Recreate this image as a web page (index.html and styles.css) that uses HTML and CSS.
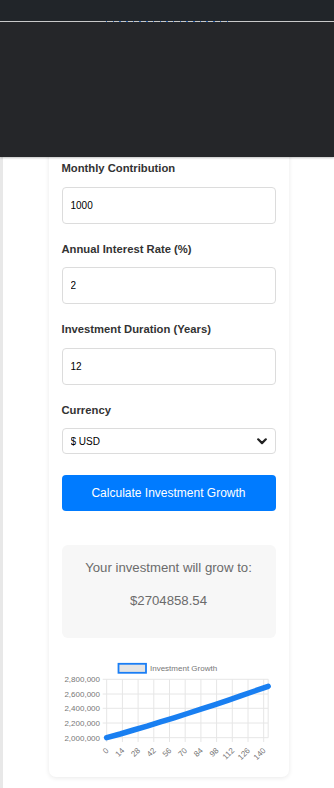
FILE: index.html
```html
<!DOCTYPE html>
<html lang="en">
<head>
    <meta charset="UTF-8">
    <meta name="viewport" content="width=device-width, initial-scale=1.0">
    <title>Investment Calculator</title>
    <link rel="stylesheet" href="styles.css">
</head>
<body>
    <div class="topbar">
        <div class="topbar-strip"><span class="topbar-dots"></span></div>
        <div class="topbar-shade"></div>
    </div>

    <div class="page">
        <div class="card">
            <div class="form-group">
                <label for="monthly">Monthly Contribution</label>
                <input type="number" id="monthly" value="1000">
            </div>

            <div class="form-group">
                <label for="rate">Annual Interest Rate (%)</label>
                <input type="number" id="rate" value="2">
            </div>

            <div class="form-group">
                <label for="years">Investment Duration (Years)</label>
                <input type="number" id="years" value="12">
            </div>

            <div class="form-group">
                <label for="currency">Currency</label>
                <div class="select-wrap">
                    <select id="currency">
                        <option>$ USD</option>
                        <option>€ EUR</option>
                        <option>£ GBP</option>
                    </select>
                    <svg class="select-arrow" width="10" height="7" viewBox="0 0 10 7">
                        <path d="M1.2 1.3 L5 5.1 L8.8 1.3" fill="none" stroke="#222" stroke-width="2.2" stroke-linecap="round" stroke-linejoin="round"/>
                    </svg>
                </div>
            </div>

            <button class="calc-btn">Calculate Investment Growth</button>

            <div class="result">
                <p>Your investment will grow to:</p>
                <p class="amount">$2704858.54</p>
            </div>

            <svg class="chart" width="214" height="109" viewBox="0 0 214 109">
                <!-- legend -->
                <rect x="56.5" y="8.8" width="27.5" height="9" fill="#e4e4e4" stroke="#1a7ef5" stroke-width="1.8"/>
                <text x="88" y="16" class="legend-text">Investment Growth</text>

                <!-- grid -->
                <g stroke="#e6e6e6" stroke-width="1">
                    <line x1="40.7" y1="24.3" x2="206.2" y2="24.3"/>
                    <line x1="40.7" y1="39" x2="206.2" y2="39"/>
                    <line x1="40.7" y1="53.3" x2="206.2" y2="53.3"/>
                    <line x1="40.7" y1="68" x2="206.2" y2="68"/>
                    <line x1="40.7" y1="82.7" x2="206.2" y2="82.7"/>
                    <line x1="44.7" y1="24.3" x2="44.7" y2="87"/>
                    <line x1="60.4" y1="24.3" x2="60.4" y2="87"/>
                    <line x1="76.1" y1="24.3" x2="76.1" y2="87"/>
                    <line x1="91.8" y1="24.3" x2="91.8" y2="87"/>
                    <line x1="107.5" y1="24.3" x2="107.5" y2="87"/>
                    <line x1="123.2" y1="24.3" x2="123.2" y2="87"/>
                    <line x1="138.9" y1="24.3" x2="138.9" y2="87"/>
                    <line x1="154.6" y1="24.3" x2="154.6" y2="87"/>
                    <line x1="170.3" y1="24.3" x2="170.3" y2="87"/>
                    <line x1="186" y1="24.3" x2="186" y2="87"/>
                    <line x1="201.7" y1="24.3" x2="201.7" y2="87"/>
                    <line x1="206.2" y1="24.3" x2="206.2" y2="82.7"/>
                </g>

                <!-- y axis -->
                <g class="tick-text" text-anchor="end">
                    <text x="38" y="27.2">2,800,000</text>
                    <text x="38" y="41.9">2,600,000</text>
                    <text x="38" y="56.2">2,400,000</text>
                    <text x="38" y="70.9">2,200,000</text>
                    <text x="38" y="85.6">2,000,000</text>
                </g>

                <!-- x axis -->
                <g class="tick-text" text-anchor="end">
                    <text transform="translate(47.2 96) rotate(-45)">0</text>
                    <text transform="translate(62.9 96) rotate(-45)">14</text>
                    <text transform="translate(78.6 96) rotate(-45)">28</text>
                    <text transform="translate(94.3 96) rotate(-45)">42</text>
                    <text transform="translate(110 96) rotate(-45)">56</text>
                    <text transform="translate(125.7 96) rotate(-45)">70</text>
                    <text transform="translate(141.4 96) rotate(-45)">84</text>
                    <text transform="translate(157.1 96) rotate(-45)">98</text>
                    <text transform="translate(172.8 96) rotate(-45)">112</text>
                    <text transform="translate(188.5 96) rotate(-45)">126</text>
                    <text transform="translate(204.2 96) rotate(-45)">140</text>
                </g>

                <!-- growth line -->
                <polyline points="44.7,82.7 58.2,79.0 71.6,75.0 85.1,71.1 98.5,66.9 112,62.8 125.5,58.5 138.9,54.2 152.4,49.8 165.8,45.3 179.3,40.7 192.7,36.0 206.2,31.3"
                          fill="none" stroke="#0d78f0" stroke-width="5.5" stroke-linecap="round" stroke-linejoin="round" opacity="0.95"/>
            </svg>
        </div>
    </div>
</body>
</html>
```

FILE: styles.css
```css
* {
    margin: 0;
    padding: 0;
    box-sizing: border-box;
}

body {
    font-family: "Liberation Sans", Arial, sans-serif;
    background: #ffffff;
    color: #333;
}

/* dark bar that sits over the top of the page */
.topbar {
    position: fixed;
    top: 0;
    left: 0;
    right: 0;
    z-index: 10;
}

.topbar-strip {
    height: 22px;
    background: #212529;
    border-bottom: 1px solid #c9c9c9;
    position: relative;
}

.topbar-dots {
    position: absolute;
    left: 106px;
    width: 126px;
    bottom: -1px;
    height: 1px;
    background: repeating-linear-gradient(90deg, #2f66b0 0, #2f66b0 1.5px, #c9c9c9 1.5px, #c9c9c9 6.7px);
}

.topbar-shade {
    height: 135px;
    background: #252629;
    box-shadow: 0 1px 2px rgba(0, 0, 0, 0.25);
}

.page {
    border-left: 3px solid #e8e8e8;
    min-height: 100vh;
    padding-top: 148px;
    padding-bottom: 11px;
}

.card {
    width: 240px;
    margin: 0 auto;
    background: white;
    border-radius: 7px;
    padding: 13px 13px 13px;
    box-shadow: 0 1px 5px rgba(0, 0, 0, 0.09);
}

.form-group {
    margin-bottom: 18px;
}

.form-group label {
    display: block;
    font-size: 11.25px;
    font-weight: bold;
    line-height: 14px;
    color: #333;
    margin-bottom: 11.5px;
}

.form-group input {
    display: block;
    width: 100%;
    height: 37px;
    padding: 0 8px;
    border: 1px solid #dcdcdc;
    border-radius: 4px;
    font-family: "Liberation Sans", Arial, sans-serif;
    font-size: 10px;
    color: #000;
    background: white;
    -moz-appearance: textfield;
}

.form-group input::-webkit-outer-spin-button,
.form-group input::-webkit-inner-spin-button {
    -webkit-appearance: none;
    margin: 0;
}

.select-wrap {
    position: relative;
}

.select-wrap select {
    display: block;
    width: 100%;
    height: 26px;
    padding: 0 8px;
    border: 1px solid #dcdcdc;
    border-radius: 4px;
    font-family: "Liberation Sans", Arial, sans-serif;
    font-size: 10px;
    color: #000;
    background: white;
    appearance: none;
    -webkit-appearance: none;
}

.select-arrow {
    position: absolute;
    right: 9px;
    top: 10px;
    pointer-events: none;
}

.calc-btn {
    display: block;
    width: 100%;
    height: 36px;
    margin-top: 21px;
    background: #007bff;
    border: none;
    border-radius: 4px;
    color: white;
    font-family: "Liberation Sans", Arial, sans-serif;
    font-size: 12px;
    cursor: pointer;
}

.result {
    margin-top: 34px;
    height: 93px;
    background: #f7f7f7;
    border-radius: 6px;
    padding: 15px 10px 0;
    text-align: center;
    color: #6b6b6b;
    font-size: 13.2px;
    line-height: 16px;
}

.result .amount {
    margin-top: 17.4px;
}

.chart {
    display: block;
    margin-top: 17px;
}

.legend-text {
    font-family: "Liberation Sans", Arial, sans-serif;
    font-size: 8px;
    fill: #777;
}

.tick-text {
    font-family: "Liberation Sans", Arial, sans-serif;
    font-size: 8px;
    fill: #777;
}
```
